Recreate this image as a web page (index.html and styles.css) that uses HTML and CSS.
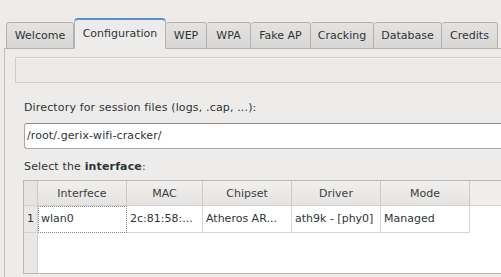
FILE: index.html
```html
<!DOCTYPE html>
<html>
<head>
<meta charset="utf-8">
<link rel="stylesheet" href="styles.css">
</head>
<body>
<div class="window">
  <div class="tabs">
    <div class="tab t-welcome">Welcome</div>
    <div class="tab active t-config">Configuration</div>
    <div class="tab t-wep">WEP</div>
    <div class="tab t-wpa">WPA</div>
    <div class="tab t-fake">Fake AP</div>
    <div class="tab t-crack">Cracking</div>
    <div class="tab t-db">Database</div>
    <div class="tab t-credits">Credits</div>
  </div>
  <div class="panel">
    <div class="bar"></div>
    <div class="content">
      <div class="label">Directory for session files (logs, .cap, ...):</div>
      <div class="input">/root/.gerix-wifi-cracker/</div>
      <div class="label label-select">Select the <b>interface</b>:</div>
      <div class="table">
        <div class="hdr corner"></div>
        <div class="hdr">Interfece</div>
        <div class="hdr">MAC</div>
        <div class="hdr">Chipset</div>
        <div class="hdr">Driver</div>
        <div class="hdr">Mode</div>
        <div class="hdr filler"></div>
        <div class="rownum">1</div>
        <div class="cell focus">wlan0</div>
        <div class="cell">2c:81:58:...</div>
        <div class="cell">Atheros AR...</div>
        <div class="cell">ath9k - [phy0]</div>
        <div class="cell">Managed</div>
        <div class="cell empty"></div>
        <div class="rownum blank"></div>
        <div class="blankrow"></div>
      </div>
    </div>
  </div>
</div>
</body>
</html>
```
FILE: styles.css
```css
html, body {
  margin: 0;
  padding: 0;
  background: #edeceb;
  overflow: hidden;
}
body {
  width: 501px;
  height: 277px;
  font-family: "DejaVu Sans", sans-serif;
  font-size: 11px;
  color: #2e3436;
}
.window {
  width: 501px;
  height: 277px;
  overflow: hidden;
}
.tabs {
  display: flex;
  align-items: flex-end;
  margin-top: 19px;
  padding-left: 6px;
  height: 30px;
  position: relative;
  z-index: 2;
  margin-bottom: -1px;
}
.tab {
  box-sizing: border-box;
  height: 27px;
  line-height: 26px;
  text-align: center;
  background: linear-gradient(#e4e3e2, #d8d7d6);
  border: 1px solid #b3b2b1;
  border-left: none;
  border-radius: 3px 3px 0 0;
  color: #2e3436;
  white-space: nowrap;
}
.t-welcome { width: 68px; border-left: 1px solid #b3b2b1; }
.t-config { width: 92px; }
.t-wep { width: 41px; }
.t-wpa { width: 44px; }
.t-fake { width: 60px; }
.t-crack { width: 63px; }
.t-db { width: 68px; }
.t-credits { width: 56px; }
.tab.active {
  height: 31px;
  line-height: 28px;
  background: #edeceb;
  border: 1px solid #b3b2b1;
  border-top: 2px solid #5b8fcf;
  border-bottom: 1px solid #edeceb;
  border-radius: 4px 4px 0 0;
}
.panel {
  margin-left: 4px;
  border-left: 1px solid #c2c1c0;
  border-top: 1px solid #b3b2b1;
  height: 230px;
  background: #edeceb;
}
.bar {
  margin-top: 8px;
  margin-left: 10px;
  height: 24px;
  border: 1px solid #cfcecd;
  border-right: none;
  background: #ebeae9;
  box-shadow: inset 0 1px 0 #f5f4f3;
}
.content {
  padding-left: 19px;
  display: flex;
  flex-direction: column;
}
.label {
  margin-top: 18px;
  line-height: 14px;
  white-space: nowrap;
  letter-spacing: 0.15px;
}
.label b {
  font-weight: bold;
}
.input {
  margin-top: 8px;
  height: 24px;
  line-height: 24px;
  border: 1px solid #a8a7a6;
  border-top-color: #8f8e8d;
  border-right: none;
  border-radius: 3px 0 0 3px;
  background: #ffffff;
  padding-left: 2px;
  color: #2e3436;
  letter-spacing: 0.1px;
}
.label-select {
  margin-top: 11px;
}
.table {
  margin-top: 6px;
  margin-left: -1px;
  height: 92px;
  border: 1px solid #b9b8b7;
  border-right: none;
  background: #ffffff;
  display: grid;
  grid-template-columns: 14px 89px 76px 89px 89px 89px 1fr;
  grid-template-rows: 25px 27px 1fr;
}
.hdr {
  background: linear-gradient(#f1f0ef, #e4e3e2);
  border-right: 1px solid #cbcac9;
  border-bottom: 1px solid #d3d2d1;
  text-align: center;
  line-height: 25px;
  color: #3a3f41;
  box-sizing: border-box;
  white-space: nowrap;
}
.hdr.corner {
  background: #e6e5e4;
}
.hdr.filler {
  border-right: none;
  background: #efeeed;
}
.rownum {
  background: #e9e8e7;
  border-right: 1px solid #d3d2d1;
  border-bottom: 1px solid #d3d2d1;
  text-align: center;
  line-height: 26px;
  box-sizing: border-box;
}
.rownum.blank {
  border-bottom: none;
}
.cell {
  border-right: 1px solid #d6d5d4;
  border-bottom: 1px solid #d6d5d4;
  line-height: 25px;
  padding-left: 3px;
  white-space: nowrap;
  overflow: hidden;
  box-sizing: border-box;
}
.cell.focus {
  border: 1px dotted #8a8a8a;
  line-height: 24px;
  padding-left: 2px;
}
.cell.empty {
  border: none;
}
.blankrow {
  grid-column: 2 / 8;
}
```
